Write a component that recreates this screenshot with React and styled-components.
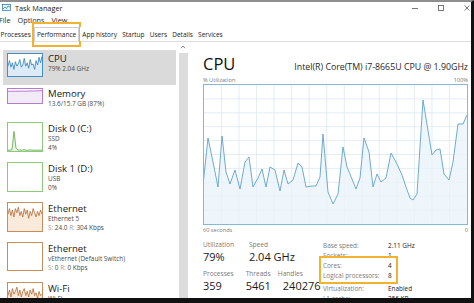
import styled, { createGlobalStyle } from "styled-components";

const GlobalStyle = createGlobalStyle`
  * { box-sizing: border-box; }
  body {
    margin: 0;
    background: #fff;
    font-family: "Open Sans", "Noto Sans", sans-serif;
    color: #1f1f1f;
  }
`;

const Window = styled.div`
  width: 474px;
  height: 303px;
  display: flex;
  flex-direction: column;
  background: #fff;
  border-top: 2px solid #8f8f8f;
  border-right: 3px solid #111;
  border-bottom: 5px solid #111;
  overflow: hidden;
`;

const TitleBar = styled.div`
  height: 12px;
  flex-shrink: 0;
  display: flex;
  align-items: center;
  padding-left: 2px;
  gap: 4px;
`;

const TitleText = styled.span`
  font-size: 7.3px;
  color: #222;
`;

const Controls = styled.div`
  margin-left: auto;
  display: flex;
  align-items: center;
  gap: 20px;
  padding-right: 1px;
`;

const MenuBar = styled.div`
  height: 12px;
  flex-shrink: 0;
  display: flex;
  align-items: center;
  gap: 7px;
  font-size: 7.3px;
  margin-left: -1px;
`;

const Tabs = styled.div`
  height: 16px;
  flex-shrink: 0;
  display: flex;
  align-items: flex-end;
  border-bottom: 1px solid #dedede;
  font-size: 6.5px;
  margin-left: -2px;
`;

const Tab = styled.div`
  position: relative;
  height: 14px;
  display: flex;
  align-items: center;
  padding: 0 ${(p) => (p.active ? "1.5px" : "1.6px")};
  margin: 0 ${(p) => (p.active ? "1px" : "0")};
  background: #fff;
  border: 1px solid ${(p) => (p.active ? "#cfcfcf" : "transparent")};
  border-bottom: none;
  color: #222;

  &::after {
    content: "";
    display: ${(p) => (p.highlight ? "block" : "none")};
    position: absolute;
    inset: -6px -3px -6px -3px;
    border: 2px solid #f2b22f;
  }
`;

const Body = styled.div`
  flex: 1;
  display: flex;
  min-height: 0;
  overflow: hidden;
`;

const Sidebar = styled.div`
  width: 188px;
  display: flex;
  flex-shrink: 0;
`;

const List = styled.div`
  width: 178px;
  padding: 8px 2px 0 3px;
  display: flex;
  flex-direction: column;
`;

const Item = styled.div`
  height: ${(p) => (p.lines === 2 ? 35 : 40)}px;
  flex-shrink: 0;
  display: flex;
  align-items: flex-start;
  gap: 5px;
  padding: 2px 0 0 4px;
  background: ${(p) => (p.selected ? "#dadada" : "transparent")};
`;

const ThumbBox = styled.div`
  width: 36px;
  height: ${(p) => p.h}px;
  margin-top: ${(p) => p.top}px;
  border: 1px solid ${(p) => p.color};
  background: #fff;
  flex-shrink: 0;
  display: flex;
`;

const ItemText = styled.div`
  display: flex;
  flex-direction: column;
`;

const ItemTitle = styled.div`
  font-size: 9.6px;
  line-height: 13px;
  color: #1a1a1a;
`;

const ItemSub = styled.div`
  font-size: 6.4px;
  line-height: 8.5px;
  color: #4a4a4a;
`;

const Dim = styled.span`
  color: #9a9a9a;
`;

const ScrollBar = styled.div`
  width: 10px;
  display: flex;
  flex-direction: column;
  align-items: center;
  padding-top: 2px;
`;

const ScrollArrow = styled.div`
  height: 6px;
  display: flex;
  align-items: center;
`;

const ScrollThumb = styled.div`
  flex: 1;
  width: 9px;
  margin-top: 3px;
  background: #dcdcdc;
`;

const Main = styled.div`
  flex: 1;
  min-width: 0;
  padding: 12px 3px 0 15px;
  display: flex;
  flex-direction: column;
  overflow: hidden;

  & > * {
    flex-shrink: 0;
  }
`;

const Header = styled.div`
  height: 19px;
  display: flex;
  align-items: baseline;
  justify-content: space-between;
`;

const BigTitle = styled.div`
  font-size: 16.5px;
  line-height: 19px;
  color: #111;
`;

const Model = styled.div`
  font-size: 8.8px;
  color: #1f1f1f;
`;

const AxisRow = styled.div`
  height: ${(p) => p.h}px;
  display: flex;
  justify-content: space-between;
  align-items: ${(p) => (p.bottom ? "flex-end" : "center")};
  font-size: 5.6px;
  line-height: 8px;
  color: #777;
`;

const Chart = styled.div`
  height: 141px;
  border: 1px solid #86b7d6;
  display: flex;
`;

const Stats = styled.div`
  display: flex;
  padding-top: 5px;
`;

const LeftStats = styled.div`
  width: 120px;
  display: flex;
  flex-direction: column;
  gap: 4px;
`;

const StatRow = styled.div`
  display: flex;
  gap: ${(p) => p.gap}px;
`;

const Stat = styled.div`
  display: flex;
  flex-direction: column;
`;

const StatLabel = styled.div`
  font-size: 6.6px;
  line-height: 9px;
  color: #7a7a7a;
  white-space: nowrap;
  margin-left: ${(p) => p.shift || 0}px;
`;

const StatValue = styled.div`
  font-size: 11px;
  line-height: 16px;
  color: #1a1a1a;
  white-space: nowrap;
`;

const RightStats = styled.div`
  display: flex;
  flex-direction: column;
  padding-top: 0;
`;

const InfoRow = styled.div`
  display: flex;
  height: 10px;
  align-items: center;
  font-size: 6.4px;
`;

const InfoLabel = styled.span`
  width: 65px;
  color: #7a7a7a;
`;

const InfoValue = styled.span`
  color: #222;
`;

const Highlight = styled.div`
  width: 71px;
  outline: 2px solid #f2b22f;
  outline-offset: 2px;
  margin-bottom: 3px;
`;

const toPts = (vals, w, h) =>
  vals.map((v, i) => `${((i * w) / (vals.length - 1)).toFixed(2)},${(v * h).toFixed(2)}`).join(" ");

const Thumb = ({ color, line, fill, vals, h, top }) => {
  const W = 34;
  const H = h - 2;
  return (
    <ThumbBox color={color} h={h} top={top}>
      {vals && (
        <svg width={W} height={H} viewBox={`0 0 ${W} ${H}`}>
          <polygon points={`${toPts(vals, W, H)} ${W},${H} 0,${H}`} fill={fill} />
          <polyline points={toPts(vals, W, H)} fill="none" stroke={line} strokeWidth="0.8" />
        </svg>
      )}
    </ThumbBox>
  );
};

const cpuVals = [0.55, 0.3, 0.6, 0.4, 0.7, 0.35, 0.55, 0.45, 0.25, 0.6, 0.5, 0.2, 0.55, 0.4, 0.65, 0.25, 0.5, 0.45, 0.7, 0.3, 0.5, 0.15, 0.4, 0.1];
const memVals = [0.16, 0.16, 0.16, 0.15, 0.15, 0.15, 0.14, 0.14, 0.13, 0.12];
const diskVals = [0.97, 0.97, 0.95, 0.3, 0.9, 0.97, 0.96, 0.97, 0.95, 0.97, 0.97, 0.96, 0.97, 0.97, 0.97, 0.97, 0.97, 0.97];
const ethVals = [0.4, 0.2, 0.45, 0.25, 0.5, 0.2, 0.35, 0.15, 0.45, 0.3, 0.5, 0.2, 0.4, 0.25, 0.55, 0.3, 0.45, 0.2, 0.35, 0.5, 0.3, 0.45, 0.25, 0.4];
const wifiVals = [0.45, 0.25, 0.5, 0.2, 0.4, 0.3, 0.15, 0.45, 0.25, 0.5, 0.3, 0.2, 0.45, 0.3, 0.5, 0.25, 0.4, 0.2, 0.45, 0.35, 0.55, 0.3, 0.45, 0.4];

const purple = "#b37ccc";
const green = "#8cc97a";
const orange = "#c98c5c";

const items = [
  { title: "CPU", subs: ["79%  2.04 GHz"], lines: 2, selected: true, thumb: { color: "#3f90c8", line: "#2e7fbd", fill: "#dcebf7", vals: cpuVals, h: 24, top: 1 } },
  { title: "Memory", subs: ["13.6/15.7 GB (87%)"], lines: 2, thumb: { color: purple, line: "#a35bbf", fill: "#f3eaf7", vals: memVals, h: 16, top: 1 } },
  { title: "Disk 0 (C:)", subs: ["SSD", "4%"], lines: 3, thumb: { color: green, line: "#5aa83f", fill: "#e8f4e2", vals: diskVals, h: 30, top: 0 } },
  { title: "Disk 1 (D:)", subs: ["USB", "0%"], lines: 3, thumb: { color: green, h: 30, top: 0 } },
  { title: "Ethernet", subs: ["Ethernet 5", <><Dim>S:</Dim> 24.0 <Dim>R:</Dim> 304 Kbps</>], lines: 3, thumb: { color: orange, line: "#b5692e", fill: "#f9eadb", vals: ethVals, h: 30, top: 0 } },
  { title: "Ethernet", subs: ["vEthernet (Default Switch)", <><Dim>S:</Dim> 0 <Dim>R:</Dim> 0 Kbps</>], lines: 3, thumb: { color: orange, h: 29, top: 0 } },
  { title: "Wi-Fi", subs: ["Wi-Fi"], lines: 3, thumb: { color: orange, line: "#b5692e", fill: "#f9eadb", vals: wifiVals, h: 30, top: 0 } },
];

// CPU graph points, traced in page coordinates (chart origin 203,82)
const cpuLine = [
  [203, 183], [208, 136], [213, 160], [218, 185], [222, 134], [226, 170], [230, 182], [235, 168], [240, 187],
  [245, 160], [249, 155], [253, 185], [258, 176], [262, 167], [266, 185], [270, 165], [275, 168], [280, 189],
  [284, 168], [288, 182], [293, 178], [298, 161], [302, 165], [306, 185], [312, 184], [316, 184], [320, 175],
  [323, 132], [328, 190], [333, 202], [338, 192], [343, 145], [347, 165], [352, 177], [356, 187], [360, 176],
  [364, 136], [369, 150], [373, 185], [377, 172], [381, 180], [386, 176], [391, 151], [396, 160], [402, 173],
  [406, 185], [410, 196], [413, 198], [417, 192], [423, 98], [432, 153], [436, 148], [440, 147], [444, 172],
  [449, 178], [453, 160], [458, 122], [463, 122], [467, 113],
];

const CpuGraph = () => {
  const W = 263;
  const H = 139;
  const pts = cpuLine.map(([x, y]) => `${x - 204},${y - 83}`).join(" ");
  const cols = Array.from({ length: 14 }, (_, i) => ((i + 1) * W) / 15);
  const rows = Array.from({ length: 9 }, (_, i) => ((i + 1) * H) / 10);
  return (
    <svg width={W} height={H} viewBox={`0 0 ${W} ${H}`}>
      {cols.map((x) => (
        <line key={`c${x}`} x1={x} y1={0} x2={x} y2={H} stroke="#dce9f3" strokeWidth="0.8" />
      ))}
      {rows.map((y) => (
        <line key={`r${y}`} x1={0} y1={y} x2={W} y2={y} stroke="#dce9f3" strokeWidth="0.8" />
      ))}
      <polygon points={`${pts} ${W},${H} 0,${H}`} fill="#eaf3fa" fillOpacity="0.75" />
      <polyline points={pts} fill="none" stroke="#5fa2cc" strokeWidth="0.9" />
    </svg>
  );
};

const AppIcon = () => (
  <svg width="9" height="8" viewBox="0 0 9 8">
    <rect x="0.5" y="0.5" width="8" height="6" fill="#e6f1fa" stroke="#3a7fb8" strokeWidth="0.8" />
    <polyline points="1,5 3,3 4.5,4.5 6,2 8,3" fill="none" stroke="#2b9e4a" strokeWidth="0.8" />
  </svg>
);

const Minimize = () => (
  <svg width="6" height="6" viewBox="0 0 6 6">
    <line x1="0" y1="3.5" x2="6" y2="3.5" stroke="#555" strokeWidth="0.8" />
  </svg>
);

const Maximize = () => (
  <svg width="6" height="6" viewBox="0 0 6 6">
    <rect x="0.5" y="0.5" width="5" height="5" fill="none" stroke="#555" strokeWidth="0.8" />
  </svg>
);

const Close = () => (
  <svg width="6" height="6" viewBox="0 0 6 6">
    <path d="M0.5 0.5 L5.5 5.5 M5.5 0.5 L0.5 5.5" stroke="#555" strokeWidth="0.8" />
  </svg>
);

const tabs = ["Processes", "Performance", "App history", "Startup", "Users", "Details", "Services"];

const info = [
  ["Base speed:", "2.11 GHz"],
  ["Sockets:", "1"],
];
const infoHi = [
  ["Cores:", "4"],
  ["Logical processors:", "8"],
];
const infoRest = [
  ["Virtualization:", "Enabled"],
  ["L1 cache:", "256 KB"],
];

const App = () => {
  return (
    <>
      <GlobalStyle />
      <Window>
        <TitleBar>
          <AppIcon />
          <TitleText>Task Manager</TitleText>
          <Controls>
            <Minimize />
            <Maximize />
            <Close />
          </Controls>
        </TitleBar>
        <MenuBar>
          <span>File</span>
          <span>Options</span>
          <span>View</span>
        </MenuBar>
        <Tabs>
          {tabs.map((t) => (
            <Tab key={t} active={t === "Performance"} highlight={t === "Performance"}>
              {t}
            </Tab>
          ))}
        </Tabs>
        <Body>
          <Sidebar>
            <List>
              {items.map((it, i) => (
                <Item key={i} lines={it.lines} selected={it.selected}>
                  <Thumb {...it.thumb} />
                  <ItemText>
                    <ItemTitle>{it.title}</ItemTitle>
                    {it.subs.map((s, j) => (
                      <ItemSub key={j}>{s}</ItemSub>
                    ))}
                  </ItemText>
                </Item>
              ))}
            </List>
            <ScrollBar>
              <ScrollArrow>
                <svg width="6" height="4" viewBox="0 0 6 4">
                  <polyline points="1,3.2 3,1 5,3.2" fill="none" stroke="#666" strokeWidth="0.8" />
                </svg>
              </ScrollArrow>
              <ScrollThumb />
            </ScrollBar>
          </Sidebar>
          <Main>
            <Header>
              <BigTitle>CPU</BigTitle>
              <Model>Intel(R) Core(TM) i7-8665U CPU @ 1.90GHz</Model>
            </Header>
            <AxisRow h={11} bottom>
              <span>% Utilization</span>
              <span>100%</span>
            </AxisRow>
            <Chart>
              <CpuGraph />
            </Chart>
            <AxisRow h={10}>
              <span>60 seconds</span>
              <span>0</span>
            </AxisRow>
            <Stats>
              <LeftStats>
                <StatRow gap={15}>
                  <Stat>
                    <StatLabel>Utilization</StatLabel>
                    <StatValue>79%</StatValue>
                  </Stat>
                  <Stat>
                    <StatLabel>Speed</StatLabel>
                    <StatValue>2.04 GHz</StatValue>
                  </Stat>
                </StatRow>
                <StatRow gap={12}>
                  <Stat>
                    <StatLabel>Processes</StatLabel>
                    <StatValue>359</StatValue>
                  </Stat>
                  <Stat>
                    <StatLabel>Threads</StatLabel>
                    <StatValue>5461</StatValue>
                  </Stat>
                  <Stat>
                    <StatLabel shift={-5}>Handles</StatLabel>
                    <StatValue>240276</StatValue>
                  </Stat>
                </StatRow>
              </LeftStats>
              <RightStats>
                {info.map(([l, v]) => (
                  <InfoRow key={l}>
                    <InfoLabel>{l}</InfoLabel>
                    <InfoValue>{v}</InfoValue>
                  </InfoRow>
                ))}
                <Highlight>
                  {infoHi.map(([l, v]) => (
                    <InfoRow key={l}>
                      <InfoLabel>{l}</InfoLabel>
                      <InfoValue>{v}</InfoValue>
                    </InfoRow>
                  ))}
                </Highlight>
                {infoRest.map(([l, v]) => (
                  <InfoRow key={l}>
                    <InfoLabel>{l}</InfoLabel>
                    <InfoValue>{v}</InfoValue>
                  </InfoRow>
                ))}
              </RightStats>
            </Stats>
          </Main>
        </Body>
      </Window>
    </>
  );
};

export default App;
